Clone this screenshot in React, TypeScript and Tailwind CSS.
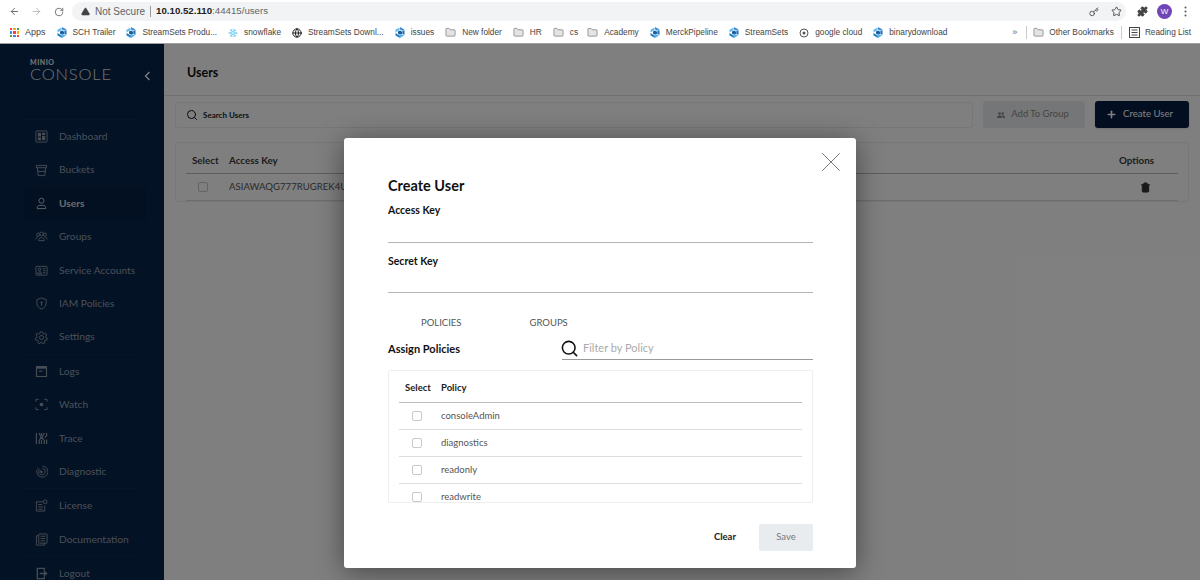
import React from "react";
import { ArrowLeft, ArrowRight, RotateCw, TriangleAlert, Star, Key, Puzzle, Snowflake, Globe, Folder, Plus, Trash2, Search, X } from "lucide-react";

const S = { width: 13, height: 13, viewBox: "0 0 14 14", fill: "none", stroke: "currentColor", strokeWidth: 1 } as const;

const DashboardIcon = () => (
  <svg {...S}><rect x="1" y="1" width="12" height="12" rx="1" /><rect x="3" y="3" width="3.5" height="4" fill="currentColor" stroke="none" /><rect x="3" y="8" width="3.5" height="3" fill="currentColor" stroke="none" /><rect x="7.5" y="3" width="3.5" height="2.5" fill="currentColor" stroke="none" /><rect x="7.5" y="6.5" width="3.5" height="4.5" fill="currentColor" stroke="none" /></svg>
);
const BucketIcon = () => (
  <svg {...S}><path d="M1.5 1.5h11v2.5h-11zM2.5 4l1 8.5h7l1-8.5M2.9 8h8.2" /></svg>
);
const UserIcon = () => (
  <svg {...S}><circle cx="7" cy="4" r="2.7" /><path d="M2.5 12.5v-1.2c0-1.4 1.2-2.3 2.5-2.3h4c1.3 0 2.5.9 2.5 2.3v1.2z" /></svg>
);
const GroupsIcon = () => (
  <svg {...S}><circle cx="3.4" cy="5" r="1.7" /><circle cx="10.6" cy="5" r="1.7" /><circle cx="7" cy="4.2" r="2" /><path d="M1 10c0-1.5 1-2.4 2.4-2.4M13 10c0-1.5-1-2.4-2.4-2.4M4 11.5c0-2 1.2-3.4 3-3.4s3 1.4 3 3.4z" /></svg>
);
const AccountsIcon = () => (
  <svg {...S}><rect x="1" y="2.5" width="12" height="9.5" rx="1" /><circle cx="5" cy="5.6" r="1.4" /><path d="M2.8 10.4c0-1.3 1-2 2.2-2s2.2.7 2.2 2zM8.6 5h2.8M8.6 7.2h2.8M8.6 9.4h2.8" /></svg>
);
const ShieldIcon = () => (
  <svg {...S}><path d="M7 1l5 1.8v4c0 3-2.2 5-5 6.2-2.8-1.2-5-3.200-5-6.200v-4z" /><circle cx="7" cy="6" r="1.100" fill="currentColor" stroke="none" /><path d="M7 6v3.500" /></svg>
);
const GearIcon = () => (
  <svg {...S}><circle cx="7" cy="7" r="2.200" /><path d="M5.800 1h2.400l.4 1.700 1.300.6 1.500-.9 1.300 1.900-1.200 1.200.2 1.500 1.500.7-.5 2.300-1.700-.1-.9 1.200.4 1.700-2.200.8-.9-1.500H6.300l-.9 1.500-2.200-.8.4-1.700-.9-1.200-1.700.1L.5 7.700 2 7l.2-1.500L1 4.300l1.300-1.900 1.500.9 1.300-.6z" /></svg>
);
const LogsIcon = () => (
  <svg {...S}><rect x="1" y="1" width="12" height="12" rx="1" fill="currentColor" stroke="none" /><rect x="2.200" y="4" width="9.600" height="7.800" fill="#07244a" stroke="none" /><rect x="4" y="6" width="4" height="1.200" fill="currentColor" stroke="none" /></svg>
);
const WatchIcon = () => (
  <svg {...S}><path d="M1 4V1.500h3M10 1.500h3V4M13 10v2.500h-3M4 12.500H1V10" /><circle cx="7" cy="7" r="2" fill="currentColor" stroke="none" /></svg>
);
const TraceIcon = () => (
  <svg {...S} strokeWidth="1.300"><path d="M1.500 1v12M4.500 1l2 5-2 3v4M7 1v3M10 1L7.500 6l2.500 3v4M12.500 1v3l-2 2M12.500 8v5M7 9v4" /></svg>
);
const DiagnosticIcon = () => (
  <svg {...S}><path d="M8 1.200A6 6 0 1 1 2.300 5" /><path d="M8 3.800A3.400 3.400 0 1 1 4.300 6" /><circle cx="7" cy="7.500" r="1.300" fill="currentColor" stroke="none" /><path d="M2.500 3l4.500 4.500" /></svg>
);
const LicenseIcon = () => (
  <svg {...S}><path d="M8.500 3H1.500v10h9V7M3.500 6h4M3.500 8.500h5M3.500 11h5" /><circle cx="11" cy="3" r="2" /></svg>
);
const DocIcon = () => (
  <svg {...S}><rect x="4" y="1" width="9" height="10" rx=".5" /><path d="M4 3H1.500v10h9v-2M6 3.500h5M6 6h5M6 8.500h5" /></svg>
);
const LogoutIcon = () => (
  <svg {...S} strokeWidth="1.400"><path d="M10 4V1.500H2.500v11H10V10" /><path d="M5 7h7M9.500 4.500L12.500 7l-3 2.500" /></svg>
);

const StreamSets = () => (
  <svg width="10" height="11" viewBox="0 0 10 11" className="shrink-0">
    <path d="M5 0l4.500 2.600-2.300 1.200L5 2.500z" fill="#3b8fd4" />
    <path d="M9.500 3v5l-2.200-1.300V4.200z" fill="#1f6fb5" />
    <path d="M9 8.500L5 11 2.800 9.600 6.800 7.300z" fill="#56b0e8" />
    <path d="M4.500 10.800L.5 8.500V6l4 2.300z" fill="#2a7fc4" />
    <path d="M.5 5.500V2.700L4.500.4v2.500z" fill="#66bbee" />
    <path d="M3 4.500l2-1 2 1.200v2l-2 1.100-2-1.200z" fill="#1b5f9e" />
  </svg>
);
const FolderIcon = () => <Folder size={11} strokeWidth={1.2} fill="#e4e4e4" className="shrink-0 text-[#555]" />;

const bookmarks: [React.ReactNode, string, string][] = [
  [<StreamSets />, "SCH Trailer", "mr-[11px]"],
  [<StreamSets />, "StreamSets Produ...", "mr-[11px]"],
  [<Snowflake size={10} strokeWidth={1.8} className="shrink-0 text-[#5cc4ee]" />, "snowflake", "mr-[11px]"],
  [<Globe size={10} strokeWidth={2.4} className="shrink-0 text-[#222]" />, "StreamSets Downl...", "mr-[11px]"],
  [<StreamSets />, "issues", "mr-[11px]"],
  [<FolderIcon />, "New folder", "mr-[11px]"],
  [<FolderIcon />, "HR", "mr-[11px]"],
  [<FolderIcon />, "cs", "mr-[9px]"],
  [<FolderIcon />, "Academy", "mr-[11px]"],
  [<StreamSets />, "MerckPipeline", "mr-[11px]"],
  [<StreamSets />, "StreamSets", "mr-[11px]"],
  [<svg width="10" height="10" viewBox="0 0 10 10" className="shrink-0"><circle cx="5" cy="5" r="4" fill="none" stroke="#555" /><circle cx="5" cy="5" r="1.500" fill="#555" /></svg>, "google cloud", "mr-[11px]"],
  [<StreamSets />, "binarydownload", "mr-[11px]"],
];

const Item = ({ icon, label, active }: { icon: React.ReactNode; label: string; active?: boolean }) => (
  <div className={`flex h-[33.4px] items-center whitespace-nowrap ${active ? "mr-[-6px] bg-[#062042]" : ""}`}>
    <span className={`flex w-[35px] justify-center ${active ? "text-[#c7ccd2]" : "text-[#8f9bab]"}`}>{icon}</span>
    <span className={`text-[10.2px] ${active ? "font-bold text-[#d4d8de]" : "text-[#93a0b0]"}`}>{label}</span>
  </div>
);

const Check = ({ className = "" }: { className?: string }) => (
  <span className={`block h-[10px] w-[10px] rounded-[2px] border border-[#c9c9c9] bg-white ${className}`} />
);

const policies = ["consoleAdmin", "diagnostics", "readonly", "readwrite"];

export default function App() {
  return (
    <div className="relative flex h-[580px] w-[1200px] flex-col overflow-hidden bg-white font-['Lato',sans-serif]">
      {/* Browser chrome */}
      <header className="z-20 h-[44px] shrink-0 border-b border-[#a0a0a0] bg-white font-['Liberation_Sans',sans-serif]">
        <div className="flex h-[23px] items-center">
          <div className="flex w-[72px] items-center pl-[9px] text-[#5f6368]">
            <ArrowLeft size={11} />
            <ArrowRight size={11} className="ml-[11px] text-[#b5b8bb]" />
            <RotateCw size={10} className="ml-[12px]" />
          </div>
          <div className="flex h-[19px] w-[1054px] items-center rounded-full bg-[#f1f3f4] pl-[9px] pr-[4px]">
            <TriangleAlert size={9} className="text-[#444]" fill="#444" stroke="#444" />
            <span className="ml-[5px] text-[10px] text-[#5f6368]">Not Secure</span>
            <span className="ml-[5px] h-[11px] w-px bg-[#9a9a9a]" />
            <span className="ml-[5px] text-[9.7px] font-bold text-[#222]">10.10.52.110<span className="font-normal text-[#666]">:44415/users</span></span>
            <Key size={10} className="ml-auto text-[#444]" />
            <Star size={11} className="ml-[12px] text-[#444]" />
          </div>
          <Puzzle size={11} className="ml-[11px] text-[#444]" fill="#444" />
          <span className="ml-[9px] flex h-[15px] w-[15px] items-center justify-center rounded-full bg-[#6f45b8] text-[8px] text-white">W</span>
          <svg width="3" height="11" viewBox="0 0 3 11" className="ml-[12px]" fill="#555"><circle cx="1.500" cy="1.500" r="1" /><circle cx="1.500" cy="5.500" r="1" /><circle cx="1.500" cy="9.500" r="1" /></svg>
        </div>
        <div className="flex h-[19px] items-center whitespace-nowrap text-[8.3px] text-[#444]">
          <div className="ml-[10px] grid h-[9px] w-[9px] shrink-0 grid-cols-3 gap-[1px]">
            {["#e44", "#fa0", "#4a4", "#48e", "#e44", "#fa0", "#4a4", "#48e", "#e44"].map((c, i) => (
              <span key={i} style={{ backgroundColor: c }} />
            ))}
          </div>
          <span className="ml-[6px] mr-[11px] text-[9px]">Apps</span>
          {bookmarks.map(([ic, t, m], i) => (
            <span key={i} className={`flex items-center gap-[6px] ${m}`}>{ic}{t}</span>
          ))}
          <span className="ml-auto text-[9px] text-[#666]">»</span>
          <span className="ml-[9px] h-[13px] w-px bg-[#ccc]" />
          <span className="ml-[6px] flex items-center gap-[5px]"><FolderIcon />Other Bookmarks</span>
          <span className="ml-[7px] h-[13px] w-px bg-[#ccc]" />
          <span className="ml-[7px] mr-[9px] flex items-center gap-[5px]">
            <svg width="11" height="11" viewBox="0 0 11 11" fill="none" stroke="#444"><rect x=".5" y=".5" width="10" height="10" /><path d="M2.500 3h6M2.500 5.500h6M2.500 8h6" /></svg>
            Reading List
          </span>
        </div>
      </header>

      <div className="flex min-h-0 flex-1">
        {/* Sidebar */}
        <aside className="flex w-[164px] shrink-0 flex-col bg-[#07244a]">
          <div className="h-[75px] shrink-0 pl-[30px] pt-[15px] text-[#dfe2e6]">
            <div className="flex items-start justify-between pr-[13px]">
              <div>
                <div className="text-[7px] font-black leading-[7px] tracking-[0.5px]">MINIO</div>
                <div className="text-[16.5px] font-light leading-[17px] tracking-[0.8px]">CONSOLE</div>
              </div>
              <span className="mt-[12px] text-[#fff]">
                <svg width="7" height="10" viewBox="0 0 7 10" fill="none" stroke="currentColor" strokeWidth="1.300"><path d="M5.500 1L1.500 5l4 4" /></svg>
              </span>
            </div>
          </div>
          <div className="ml-[24px] w-[116px]">
            <div className="border-t border-[#0c2a52]" />
            <div className="border-b border-[#0c2a52]">
              <Item icon={<DashboardIcon />} label="Dashboard" />
              <Item icon={<BucketIcon />} label="Buckets" />
              <Item icon={<UserIcon />} label="Users" active />
              <Item icon={<GroupsIcon />} label="Groups" />
              <Item icon={<AccountsIcon />} label="Service Accounts" />
              <Item icon={<ShieldIcon />} label="IAM Policies" />
              <Item icon={<GearIcon />} label="Settings" />
            </div>
            <div className="border-b border-[#0c2a52]">
              <Item icon={<LogsIcon />} label="Logs" />
              <Item icon={<WatchIcon />} label="Watch" />
              <Item icon={<TraceIcon />} label="Trace" />
              <Item icon={<DiagnosticIcon />} label="Diagnostic" />
            </div>
            <div className="border-b border-[#0c2a52]">
              <Item icon={<LicenseIcon />} label="License" />
              <Item icon={<DocIcon />} label="Documentation" />
            </div>
            <Item icon={<LogoutIcon />} label="Logout" />
          </div>
        </aside>

        {/* Content */}
        <main className="min-w-0 flex-1 bg-white">
          <div className="flex h-[52px] items-center border-b border-[#e0e0e0] pl-[23px] pt-[8px] text-[12.5px] font-bold text-[#111]">Users</div>
          <div className="mt-[5px] flex items-center pl-[11px] pr-[11px]">
            <div className="flex h-[26px] flex-1 items-center rounded-[3px] border border-[#eee] pl-[10px] text-[8px] font-bold text-[#222]">
              <Search size={12} strokeWidth={2} className="mr-[5px] text-[#111]" />
              Search Users
            </div>
            <button className="ml-[10px] flex h-[27px] w-[102px] items-center justify-center gap-[6px] rounded-[3px] bg-[#eaedee] pr-[2px] text-[9.5px] text-[#8a8a8a]">
              <svg width="8" height="6" viewBox="0 0 8 6" fill="currentColor"><circle cx="2.500" cy="1.500" r="1.300" /><circle cx="5.700" cy="1.500" r="1.300" /><path d="M0 6c0-2 1-2.800 2.500-2.800S5 4 5 6zM5.600 6c0-1.200-.3-2-.8-2.600 2-.5 3.200.6 3.200 2.600z" /></svg>
              Add To Group
            </button>
            <button className="ml-[10px] flex h-[27px] w-[94px] items-center justify-center gap-[6px] rounded-[3px] bg-[#081c42] pr-[5px] text-[9.6px] text-white shadow-sm">
              <Plus size={11} strokeWidth={3.5} /> Create User
            </button>
          </div>
          <div className="mx-[11px] mt-[14px] rounded-[3px] border border-[#eee] px-[10px] pt-[9px]">
            <div className="flex h-[22px] items-center border-b border-[#bbb] pb-[4px] text-[9.8px] font-bold text-[#3a3a3a]">
              <span className="w-[36px] pl-[6px] box-content">Select</span>
              <span className="ml-[1px]">Access Key</span>
              <span className="ml-auto pr-[24px]">Options</span>
            </div>
            <div className="flex h-[27px] items-center border-b border-[#ddd] text-[9.6px] text-[#555]">
              <Check className="ml-[12px]" />
              <span className="ml-[21px]">ASIAWAQG777RUGREK4U</span>
              <Trash2 size={11} strokeWidth={2} className="ml-auto mr-[27px] text-[#333]" fill="#333" />
            </div>
          </div>
        </main>
      </div>

      {/* Modal overlay */}
      <div className="absolute inset-x-0 bottom-0 top-[44px] z-10 flex justify-center bg-black/50 pt-[94px]">
        <div className="relative h-[430px] w-[512px] rounded-[3px] bg-white pl-[44px] pr-[43px] pt-[39px] shadow-[0_4px_28px_rgba(0,0,0,0.45)]">
          <X size={34} strokeWidth={0.7} className="absolute right-[8px] top-[7px] text-[#777]" />
          <h2 className="text-[14.5px] font-bold leading-[18px] text-[#111]">Create User</h2>
          <div className="mt-[9px] text-[10.5px] font-bold leading-[13px] text-[#111]">Access Key</div>
          <div className="h-[26px] border-b border-[#b5b5b5]" />
          <div className="mt-[12px] text-[10.5px] font-bold leading-[13px] text-[#111]">Secret Key</div>
          <div className="h-[25px] border-b border-[#b5b5b5]" />
          <div className="mt-[24px] flex text-[9.5px] leading-[12px] text-[#555]">
            <span className="ml-[33px]">POLICIES</span>
            <span className="ml-[68px]">GROUPS</span>
          </div>
          <div className="mt-[9px] flex h-[22px] items-center">
            <span className="w-[174px] text-[11px] font-bold text-[#111]">Assign Policies</span>
            <div className="flex h-[22px] flex-1 items-center border-b border-[#999]">
              <Search size={19} strokeWidth={2} className="ml-[-2px] text-[#111]" />
              <span className="ml-[4px] text-[11px] text-[#aaa]">Filter by Policy</span>
            </div>
          </div>
          <div className="mt-[10px] h-[133px] overflow-hidden rounded-[2px] border border-[#eee] px-[10px]">
            <div className="flex h-[32px] items-center border-b border-[#bbb] pt-[3px] text-[9.5px] font-bold text-[#222]">
              <span className="ml-[6px] w-[36px]">Select</span>
              <span>Policy</span>
            </div>
            {policies.map((p) => (
              <div key={p} className="flex h-[27px] shrink-0 items-center border-b border-[#ddd] text-[9.5px] text-[#555]">
                <Check className="ml-[13px]" />
                <span className="ml-[19px]">{p}</span>
              </div>
            ))}
          </div>
          <div className="mt-[21px] flex items-center justify-end">
            <span className="text-[9.5px] font-bold text-[#222]">Clear</span>
            <button className="ml-[23px] h-[27px] w-[54px] rounded-[2px] bg-[#e9ecef] text-[9.5px] text-[#777]">Save</button>
          </div>
        </div>
      </div>
    </div>
  );
}
